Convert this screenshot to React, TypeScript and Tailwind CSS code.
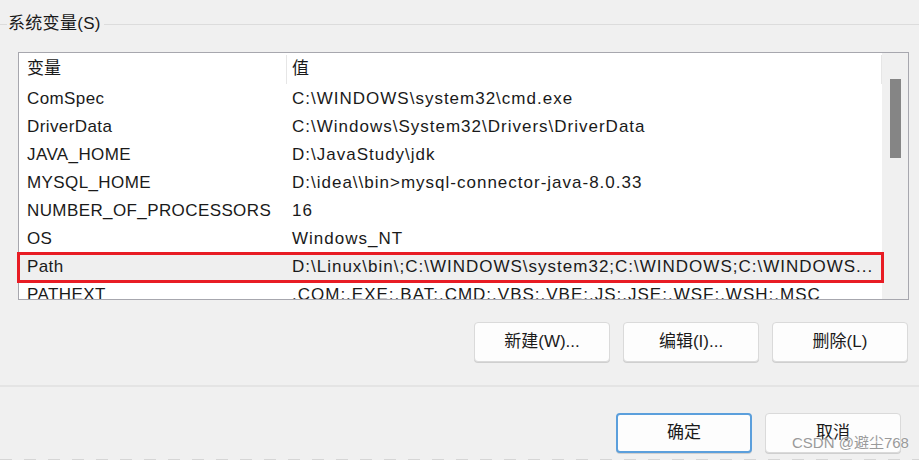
import React from "react";

const font = { fontFamily: '"Liberation Sans", "Noto Sans CJK SC", sans-serif' };

// system variables shown in the list
const rows = [
  { name: "ComSpec", value: "C:\\WINDOWS\\system32\\cmd.exe" },
  { name: "DriverData", value: "C:\\Windows\\System32\\Drivers\\DriverData" },
  { name: "JAVA_HOME", value: "D:\\JavaStudy\\jdk" },
  { name: "MYSQL_HOME", value: "D:\\idea\\\\bin>mysql-connector-java-8.0.33" },
  { name: "NUMBER_OF_PROCESSORS", value: "16" },
  { name: "OS", value: "Windows_NT" },
  { name: "Path", value: "D:\\Linux\\bin\\;C:\\WINDOWS\\system32;C:\\WINDOWS;C:\\WINDOWS..." },
  { name: "PATHEXT", value: ".COM;.EXE;.BAT;.CMD;.VBS;.VBE;.JS;.JSE;.WSF;.WSH;.MSC" },
];

const WinButton = ({ label, primary }: { label: string; primary?: boolean }) => (
  <button
    className={
      "h-[40px] w-[136px] rounded-[4px] bg-[#fdfdfd] text-[17px] text-[#1b1b1b] shadow-[0_1px_0_#cfcfcf] " +
      (primary ? "border-2 border-[#5b9fdc]" : "border border-[#dadada]")
    }
  >
    {label}
  </button>
);

export default function App() {
  return (
    <div className="w-[919px] h-[460px] bg-[#f0f0f0] text-[#1a1a1a] overflow-hidden flex flex-col relative" style={font}>
      {/* group title */}
      <div className="flex items-center h-[20px] mt-[14px]">
        <div className="w-[7px] h-px bg-[#dcdcdc]"></div>
        <span className="text-[17px] leading-[20px] px-[1px] tracking-[0.3px]">系统变量(S)</span>
        <div className="flex-1 h-px bg-[#dcdcdc] ml-[2px]"></div>
      </div>

      {/* list */}
      <div className="relative mt-[18px] ml-[18px] mr-[10px] h-[248px]">
        <div className="h-full border border-[#a7a7ae] bg-white flex overflow-hidden">
          <div className="flex-1 flex flex-col">
            <div className="flex h-[32px] items-center text-[17px] shrink-0">
              <div className="w-[267px] pl-[8px]">变量</div>
              <div className="w-px h-[29px] bg-[#e6e6e6]"></div>
              <div className="flex-1 pl-[5px]">值</div>
              <div className="w-px h-[29px] bg-[#e6e6e6]"></div>
            </div>
            {rows.map((r) => (
              <div
                key={r.name}
                className={
                  "flex h-[28px] items-center text-[17px] shrink-0 whitespace-nowrap " +
                  (r.name === "Path" ? "bg-[#efefef]" : "")
                }
              >
                <div className="w-[268px] pl-[8px] tracking-[0.4px]">{r.name}</div>
                <div className="flex-1 pl-[5px] overflow-hidden tracking-[1px]">{r.value}</div>
              </div>
            ))}
          </div>
          {/* scrollbar */}
          <div className="w-[26px] bg-[#f0f0f0] pt-[26px] pl-[8px]">
            <div className="w-[11px] h-[79px] bg-[#858585]"></div>
          </div>
        </div>
        {/* red annotation box */}
        <div className="absolute left-[-1px] top-[200px] w-[867px] h-[31px] border-[3px] border-[#e81c24]"></div>
      </div>

      {/* action buttons */}
      <div className="flex justify-end gap-[13px] mt-[22px] mr-[11px]">
        <WinButton label="新建(W)..." />
        <WinButton label="编辑(I)..." />
        <WinButton label="删除(L)" />
      </div>

      <div className="h-[2px] bg-[#e4e4e4] mt-[23px]"></div>

      {/* dialog buttons */}
      <div className="flex justify-end gap-[13px] mt-[26px] mr-[18px]">
        <WinButton label="确定" primary />
        <WinButton label="取消" />
      </div>

      <div className="h-px mt-[6px] bg-[repeating-linear-gradient(90deg,#d6d6d6_0_12px,transparent_12px_24px)]"></div>

      {/* watermark */}
      <div className="absolute left-[792px] top-[433px] text-[15px] leading-[20px] text-[#9a9a9a] [text-shadow:0_0_2px_#fff]">
        CSDN @避尘768
      </div>
    </div>
  );
}
